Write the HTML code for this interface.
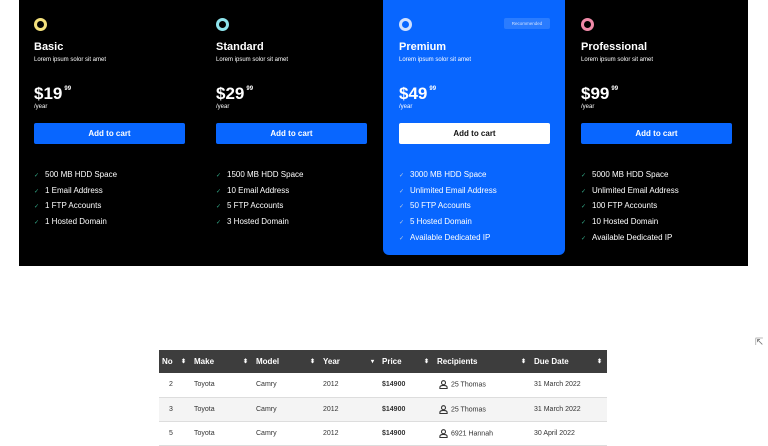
<!DOCTYPE html>
<html><head><meta charset="utf-8"><style>
*{margin:0;padding:0;box-sizing:border-box}
body{width:768px;height:432px;background:#fff;position:relative;overflow:hidden;font-family:"Liberation Sans",Arial,sans-serif}
.panel{position:absolute;left:19px;top:0;width:729px;height:266px;background:#000}
.prem{position:absolute;left:383px;top:0;width:182px;height:255px;background:#0866ff;border-radius:0 0 6px 6px}
.card{position:absolute;top:0;width:151px;color:#fff}
.ring{position:absolute;top:18px;left:0;width:13px;height:13px;border-radius:50%;border:3px solid}
.title{position:absolute;top:41px;left:0;font-size:11px;font-weight:bold}
.sub{position:absolute;top:57px;left:0;font-size:6px;white-space:nowrap}
.price{position:absolute;top:84px;left:0;font-size:17px;font-weight:bold}
.price sup{font-size:6px;vertical-align:top;position:relative;top:2px;margin-left:2px}
.yr{position:absolute;top:104px;left:0;font-size:6px}
.btn{position:absolute;top:123px;left:0;width:151px;height:21px;background:#0866ff;border-radius:2px;font-size:8px;font-weight:bold;text-align:center;line-height:21px;color:#fff}
.feat{position:absolute;top:167px;left:0;font-size:8px;white-space:nowrap}
.feat div{height:15.7px;line-height:15.7px}
.feat span{color:#3a8;font-size:6px;margin-right:6px;display:inline-block;width:5px}
.rec{position:absolute;top:18px;left:105px;width:46px;height:11px;background:#2a7cff;border-radius:2px;font-size:4.5px;color:#cfe0ff;text-align:center;line-height:11px}
table{position:absolute;left:159px;top:350px;width:448px;border-collapse:collapse;font-size:7px;color:#333}
th{background:#3d3d3d;color:#fff;height:23px;text-align:left;font-size:8px;padding-left:3px;position:relative}
th i{position:absolute;right:5px;font-style:normal;font-size:6px;top:8px}
td{height:24px;border-bottom:1px solid #ddd;padding-left:3px}
tr.a td{background:#f4f4f4}
svg{vertical-align:middle;margin-right:3px}
</style></head><body>
<div class="panel"></div>
<div class="prem"></div>

<div class="card" style="left:34px">
<div class="ring" style="border-color:#f3e07c"></div><div class="title">Basic</div><div class="sub">Lorem ipsum solor sit amet</div>
<div class="price">$19<sup>99</sup></div><div class="yr">/year</div><div class="btn">Add to cart</div>
<div class="feat"><div><span>✓</span>500 MB HDD Space</div><div><span>✓</span>1 Email Address</div><div><span>✓</span>1 FTP Accounts</div><div><span>✓</span>1 Hosted Domain</div></div></div>

<div class="card" style="left:216px">
<div class="ring" style="border-color:#8ee4ec"></div><div class="title">Standard</div><div class="sub">Lorem ipsum solor sit amet</div>
<div class="price">$29<sup>99</sup></div><div class="yr">/year</div><div class="btn">Add to cart</div>
<div class="feat"><div><span>✓</span>1500 MB HDD Space</div><div><span>✓</span>10 Email Address</div><div><span>✓</span>5 FTP Accounts</div><div><span>✓</span>3 Hosted Domain</div></div></div>

<div class="card" style="left:399px">
<div class="ring" style="border-color:#cfe0ff"></div><div class="rec">Recommended</div><div class="title">Premium</div><div class="sub">Lorem ipsum solor sit amet</div>
<div class="price">$49<sup>99</sup></div><div class="yr">/year</div><div class="btn" style="background:#fff;color:#111">Add to cart</div>
<div class="feat"><div><span style="color:#bcd">✓</span>3000 MB HDD Space</div><div><span style="color:#bcd">✓</span>Unlimited Email Address</div><div><span style="color:#bcd">✓</span>50 FTP Accounts</div><div><span style="color:#bcd">✓</span>5 Hosted Domain</div><div><span style="color:#bcd">✓</span>Available Dedicated IP</div></div></div>

<div class="card" style="left:581px">
<div class="ring" style="border-color:#f08aa8"></div><div class="title">Professional</div><div class="sub">Lorem ipsum solor sit amet</div>
<div class="price">$99<sup>99</sup></div><div class="yr">/year</div><div class="btn">Add to cart</div>
<div class="feat"><div><span>✓</span>5000 MB HDD Space</div><div><span>✓</span>Unlimited Email Address</div><div><span>✓</span>100 FTP Accounts</div><div><span>✓</span>10 Hosted Domain</div><div><span>✓</span>Available Dedicated IP</div></div></div>

<div style="position:absolute;left:755px;top:337px;font-size:10px;color:#777">⇱</div>

<table>
<colgroup><col style="width:32px"><col style="width:62px"><col style="width:67px"><col style="width:59px"><col style="width:55px"><col style="width:97px"><col style="width:76px"></colgroup>
<tr><th>No<i>⬍</i></th><th>Make<i>⬍</i></th><th>Model<i>⬍</i></th><th>Year<i>▾</i></th><th>Price<i>⬍</i></th><th>Recipients<i>⬍</i></th><th>Due Date<i>⬍</i></th></tr>
<tr><td style="padding-left:10px">2</td><td>Toyota</td><td>Camry</td><td>2012</td><td><b>$14900</b></td><td>&nbsp;<svg width="9" height="9" viewBox="0 0 10 10"><circle cx="5" cy="3" r="2.2" fill="none" stroke="#333" stroke-width="1.2"/><path d="M1 9.5v-1.5q0-2 4-2t4 2v1.5z" fill="none" stroke="#333" stroke-width="1.2"/></svg>25 Thomas</td><td>31 March 2022</td></tr>
<tr class="a"><td style="padding-left:10px">3</td><td>Toyota</td><td>Camry</td><td>2012</td><td><b>$14900</b></td><td>&nbsp;<svg width="9" height="9" viewBox="0 0 10 10"><circle cx="5" cy="3" r="2.2" fill="none" stroke="#333" stroke-width="1.2"/><path d="M1 9.5v-1.5q0-2 4-2t4 2v1.5z" fill="none" stroke="#333" stroke-width="1.2"/></svg>25 Thomas</td><td>31 March 2022</td></tr>
<tr><td style="padding-left:10px">5</td><td>Toyota</td><td>Camry</td><td>2012</td><td><b>$14900</b></td><td>&nbsp;<svg width="9" height="9" viewBox="0 0 10 10"><circle cx="5" cy="3" r="2.2" fill="none" stroke="#333" stroke-width="1.2"/><path d="M1 9.5v-1.5q0-2 4-2t4 2v1.5z" fill="none" stroke="#333" stroke-width="1.2"/></svg>6921 Hannah</td><td>30 April 2022</td></tr>
</table>
</body></html>
